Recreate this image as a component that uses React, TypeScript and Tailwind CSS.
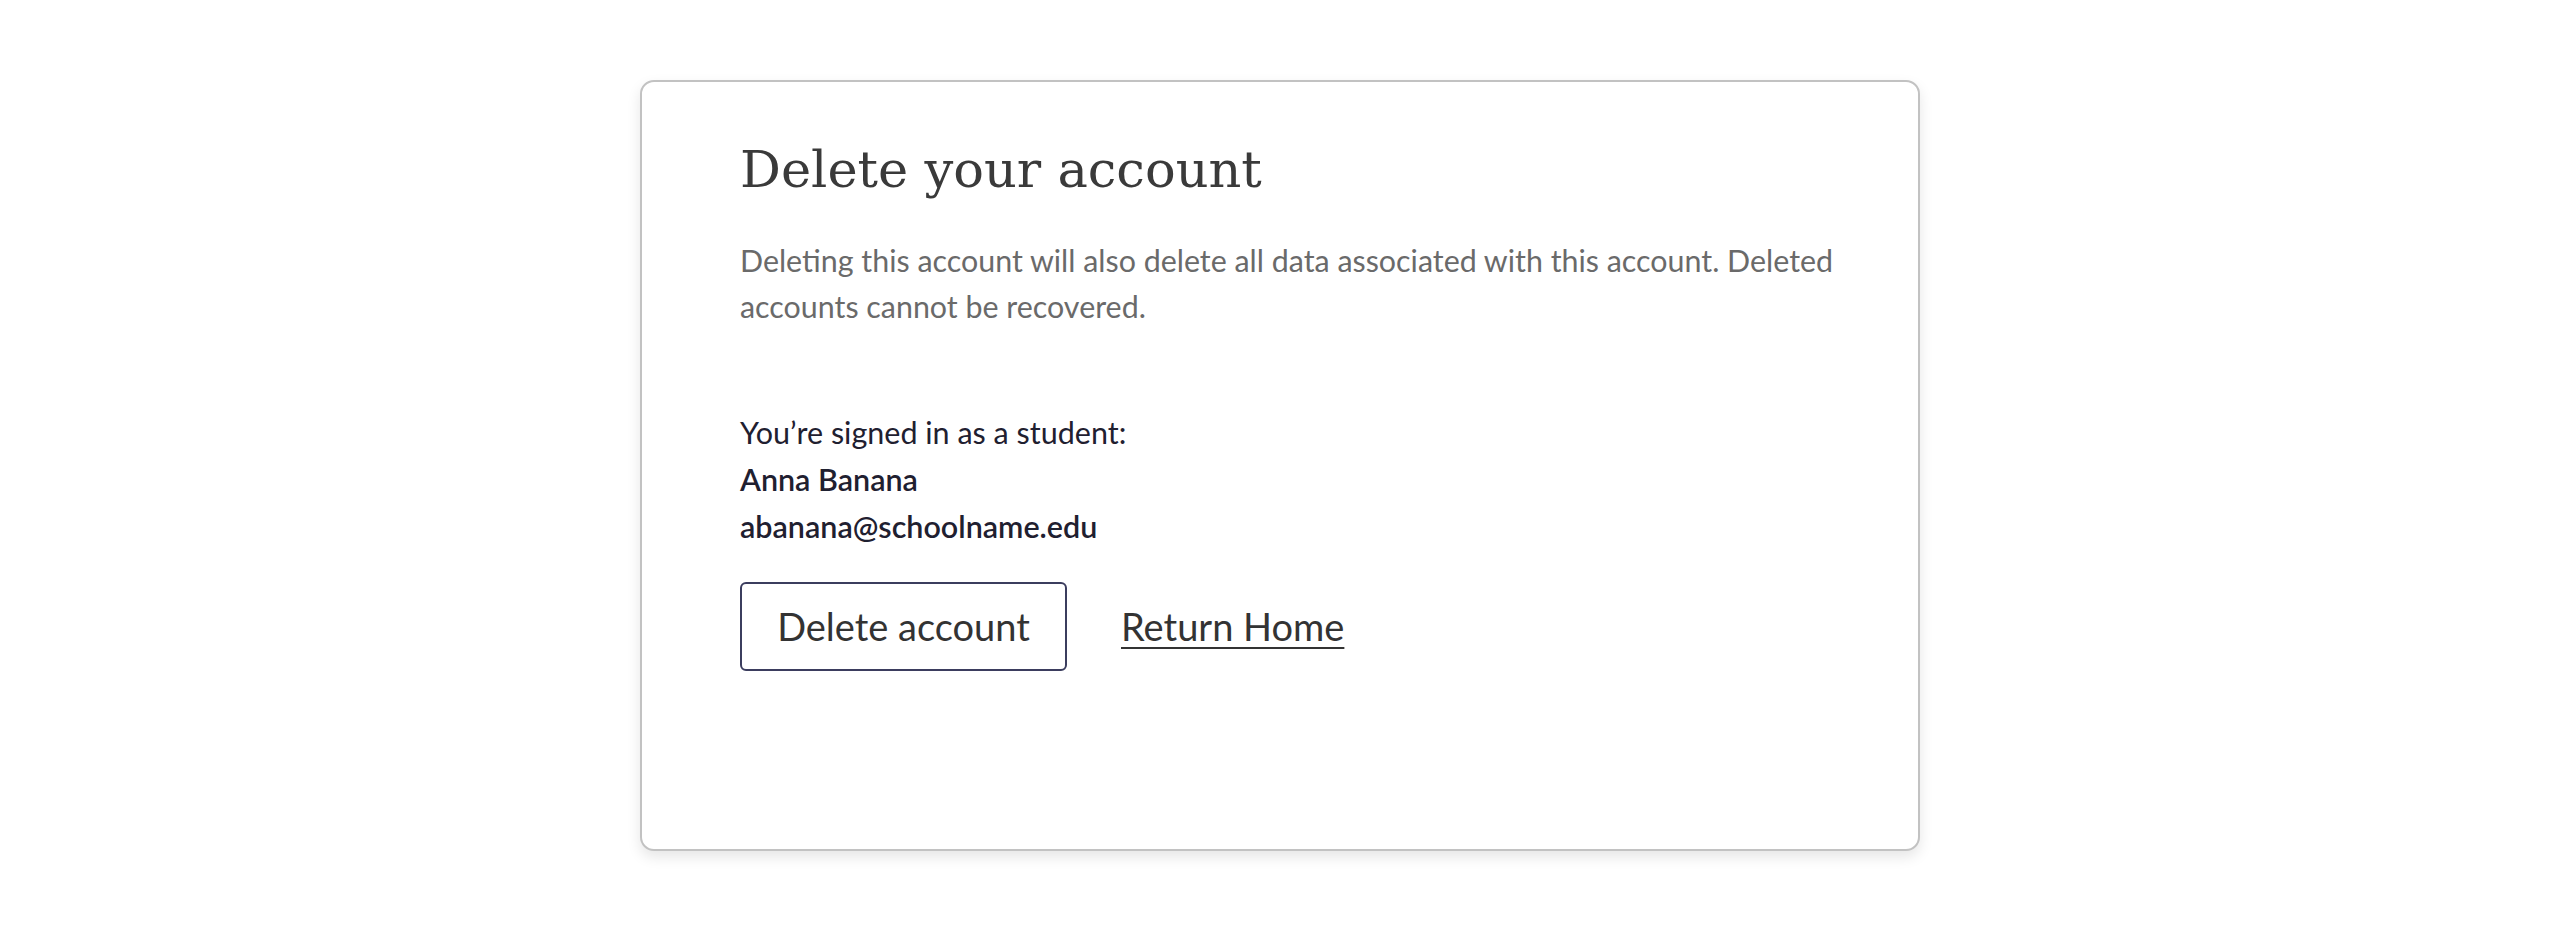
import React from "react";

const sans = "font-['Lato','Liberation_Sans',sans-serif]";

const DeleteAccount = () => {
  return (
    <div className="min-h-screen bg-white pt-[80px]">
      <div className="mx-auto h-[771px] w-[1280px] rounded-[14px] border-2 border-[#c2c2c2] bg-white pl-[98px] pr-[40px] pt-[58px] shadow-[0_6px_14px_rgba(0,0,0,0.10)]">
        <h1 className="font-['DejaVu_Serif','Liberation_Serif',serif] text-[51px] leading-[60px] text-[#3a3a3a]">
          Delete your account
        </h1>
        <p className={`${sans} mt-[37px] max-w-[1120px] text-[30.4px] leading-[46px] text-[#6a6a6a]`}>
          Deleting this account will also delete all data associated with this account. Deleted accounts cannot be recovered.
        </p>
        <div className={`${sans} mt-[80px] text-[30.5px] leading-[47px] text-[#1f2030]`}>
          <p>You’re signed in as a student:</p>
          <p className="font-semibold">Anna Banana</p>
          <p className="font-semibold">abanana@schoolname.edu</p>
        </div>
        <div className={`${sans} mt-[32px] flex items-center gap-[54px]`}>
          <button className="h-[89px] w-[327px] rounded-[6px] border-2 border-[#3b3d5e] bg-white text-[38px] text-[#333]">
            Delete account
          </button>
          <a href="#" className="text-[38px] text-[#333] underline decoration-2 underline-offset-[6px]">
            Return Home
          </a>
        </div>
      </div>
    </div>
  );
};

export default function App() {
  return <DeleteAccount />;
}
